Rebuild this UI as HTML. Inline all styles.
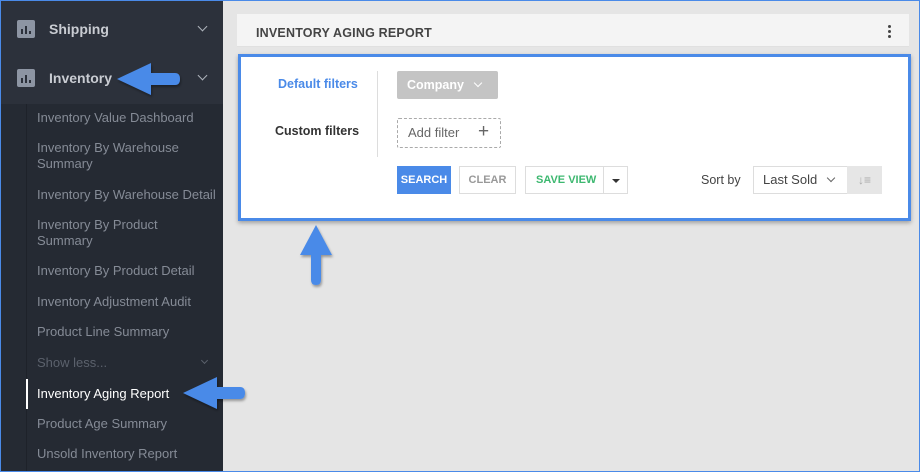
<!DOCTYPE html>
<html><head><style>
*{margin:0;padding:0;box-sizing:border-box}
body{width:920px;height:472px;overflow:hidden;font-family:"Liberation Sans",sans-serif;background:#e5e5e5;position:relative}
.frame{position:absolute;inset:0;border:1px solid #4a8ae8;z-index:20;pointer-events:none}
.sb{position:absolute;left:0;top:0;width:223px;height:472px;background:#2c313b}
.sub{position:absolute;left:0;top:104px;width:223px;height:368px;background:#252a33}
.line{position:absolute;left:26px;top:104px;width:1px;height:368px;background:#1e222a}
.hd{position:absolute;left:17px;font-size:14px;font-weight:bold;color:#c9ccd2}
.ico{position:absolute;left:17px;width:18px;height:18px;background:#8d95a3;border-radius:2px}
.ico i{position:absolute;bottom:4px;width:2px;background:#2c313b}
.chev{position:absolute;left:199px;width:7px;height:7px;border-right:1.5px solid #aeb3bb;border-bottom:1.5px solid #aeb3bb;transform:rotate(45deg)}
.it{position:absolute;left:37px;font-size:13px;color:#858b96;line-height:16px}
.card{position:absolute;left:237px;top:14px;width:672px;height:33px;background:#f4f4f4;border-bottom:1px solid #e0e0e0}
.card span{position:absolute;left:19px;top:12px;font-size:12.5px;color:#444;font-weight:bold;letter-spacing:.2px}
.box{position:absolute;left:238px;top:54px;width:673px;height:167px;background:#fff;border:3px solid #4a8ae8;box-shadow:0 2px 4px rgba(0,0,0,.3)}
.abs{position:absolute}
.dn{display:inline-block;width:6px;height:6px;border-right:1.3px solid currentColor;border-bottom:1.3px solid currentColor;transform:rotate(45deg);position:relative;top:-3px}
</style></head><body>
<div class="sb"></div><div class="sub"></div><div class="line"></div>
<div class="ico" style="top:20px"><i style="left:4px;height:5px"></i><i style="left:8px;height:8px"></i><i style="left:12px;height:3px"></i></div>
<div class="hd" style="left:49px;top:21px">Shipping</div><div class="chev" style="top:23px"></div>
<div class="ico" style="top:69px"><i style="left:4px;height:5px"></i><i style="left:8px;height:8px"></i><i style="left:12px;height:3px"></i></div>
<div class="hd" style="left:49px;top:70px">Inventory</div><div class="chev" style="top:72px"></div>
<div class="it" style="top:110px">Inventory Value Dashboard</div>
<div class="it" style="top:140px">Inventory By Warehouse<br>Summary</div>
<div class="it" style="top:187px">Inventory By Warehouse Detail</div>
<div class="it" style="top:217px">Inventory By Product<br>Summary</div>
<div class="it" style="top:263px">Inventory By Product Detail</div>
<div class="it" style="top:294px">Inventory Adjustment Audit</div>
<div class="it" style="top:324px">Product Line Summary</div>
<div class="it" style="top:355px;color:#5b616c">Show less...</div>
<div class="chev" style="left:202px;top:358px;width:5px;height:5px;border-color:#5b616c;border-width:1px"></div>
<div class="abs" style="left:26px;top:379px;width:2px;height:30px;background:#fff"></div>
<div class="it" style="top:386px;color:#fff">Inventory Aging Report</div>
<div class="it" style="top:416px">Product Age Summary</div>
<div class="it" style="top:446px">Unsold Inventory Report</div>

<div class="card"><span>INVENTORY AGING REPORT</span>
<div class="abs" style="left:651px;top:11px;width:3px;height:3px;background:#444;border-radius:50%;box-shadow:0 5px 0 #444,0 10px 0 #444"></div></div>
<div class="box">
<div class="abs" style="left:37px;top:20px;font-size:12.5px;font-weight:bold;color:#4a8ae8">Default filters</div>
<div class="abs" style="left:34px;top:67px;font-size:12.5px;font-weight:bold;color:#333">Custom filters</div>
<div class="abs" style="left:136px;top:14px;width:1px;height:86px;background:#ddd"></div>
<div class="abs" style="left:156px;top:14px;width:101px;height:28px;background:#c4c4c4;border-radius:2px;color:#fff;font-size:12.5px;font-weight:bold;padding:7px 10px">Company <span class="dn" style="margin-left:8px"></span></div>
<div class="abs" style="left:156px;top:61px;width:104px;height:30px;border:1.5px dashed #aaa;border-radius:2px;color:#666;font-size:13px;line-height:27px;padding-left:10px">Add filter<span class="abs" style="left:80px;top:0;font-size:19px;line-height:25px">+</span></div>
<div class="abs" style="left:156px;top:109px;width:54px;height:28px;background:#4a8ae8;color:#fff;font-size:11px;font-weight:bold;text-align:center;line-height:28px">SEARCH</div>
<div class="abs" style="left:218px;top:109px;width:57px;height:28px;border:1px solid #ddd;color:#999;font-size:11px;font-weight:bold;text-align:center;line-height:26px">CLEAR</div>
<div class="abs" style="left:284px;top:109px;width:103px;height:28px;border:1px solid #ddd;font-size:11px;font-weight:bold;color:#3db870;line-height:26px;padding-left:10px">SAVE VIEW</div>
<div class="abs" style="left:362px;top:109px;width:1px;height:28px;background:#ddd"></div>
<div class="abs" style="left:371px;top:122px;border:4px solid transparent;border-top:4px solid #333;border-bottom:0"></div>
<div class="abs" style="left:460px;top:116px;font-size:12.5px;color:#444">Sort by</div>
<div class="abs" style="left:512px;top:109px;width:95px;height:28px;border:1px solid #ddd;font-size:13px;color:#444;line-height:26px;padding-left:9px">Last Sold <span class="dn" style="margin-left:7px;color:#666"></span></div>
<div class="abs" style="left:606px;top:109px;width:35px;height:28px;background:#e6e6e6;color:#aaa;font-size:12px;text-align:center;line-height:28px">↓≡</div>
</div>

<svg class="abs" style="left:0;top:0;z-index:10" width="920" height="472">
<defs><filter id="s"><feDropShadow dx="1" dy="2" stdDeviation="1.2" flood-opacity=".35"/></filter></defs>
<g fill="#4a8ae8" filter="url(#s)">
<path d="M117 79 L151 63 L151 73 L175 73 Q180 73 180 79 Q180 85 175 85 L151 85 L151 95 Z"/>
<path d="M183 393 L217 377 L217 387 L240 387 Q245 387 245 393 Q245 399 240 399 L217 399 L217 409 Z"/>
<path d="M316 225 L332 255 L321 255 L321 280 Q321 285 316 285 Q311 285 311 280 L311 255 L300 255 Z"/>
</g></svg>
<div class="frame"></div>
</body></html>
